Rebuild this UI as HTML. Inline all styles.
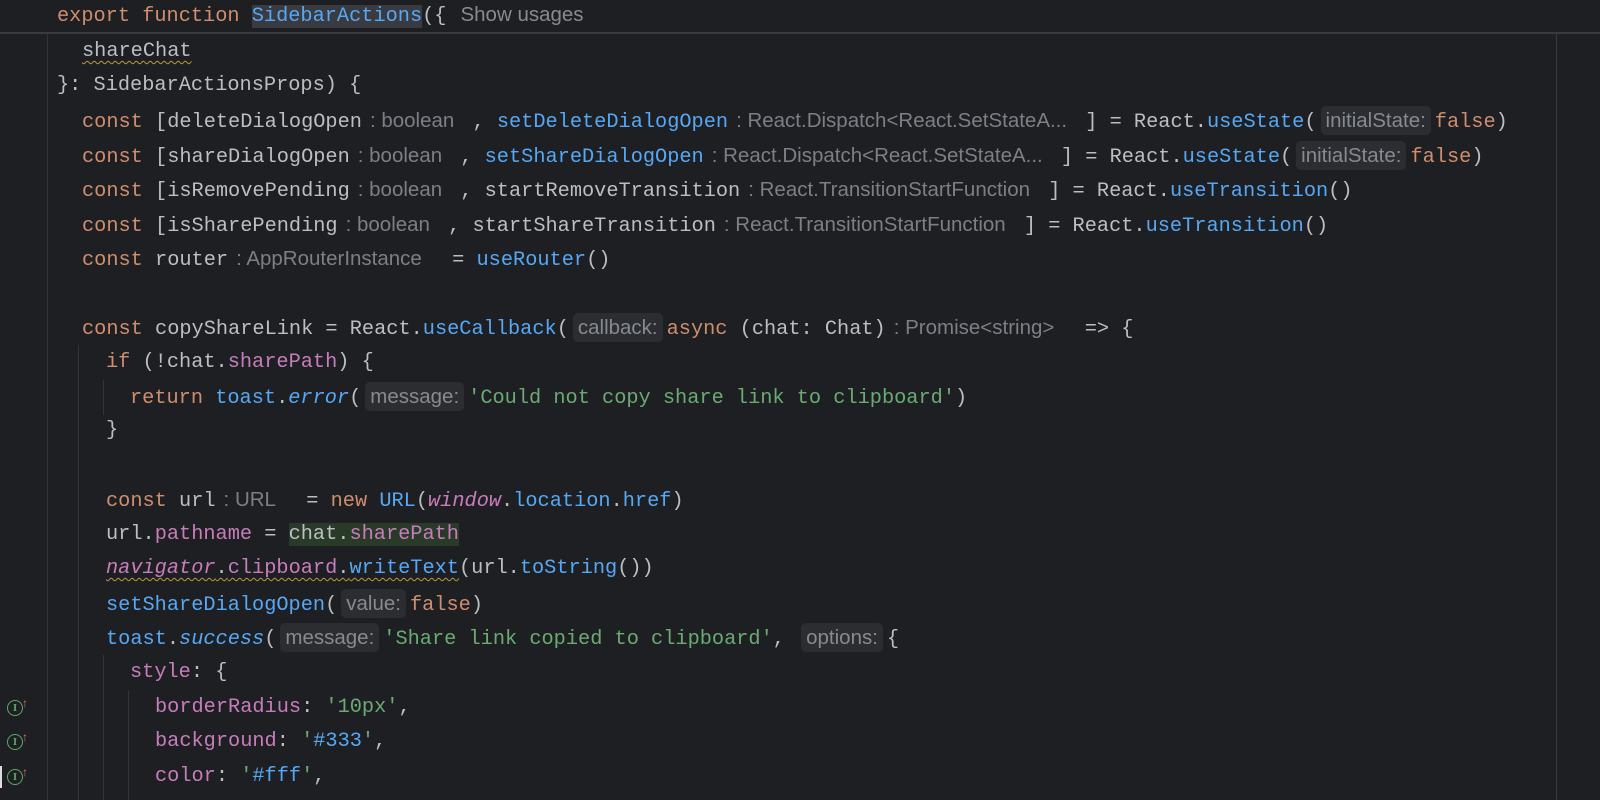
<!DOCTYPE html>
<html><head><meta charset="utf-8"><style>
html,body{margin:0;padding:0;background:#1e1f22;width:1600px;height:800px;overflow:hidden;position:relative}
.l{position:absolute;left:0;height:34px;line-height:34px;white-space:pre;font-family:"Liberation Mono","DejaVu Sans Mono",monospace;font-size:20.3px;color:#bcbec4}
.k{color:#cf8e6d}.f{color:#56a8f5}.p{color:#c77dbb}.s{color:#6aab73}.i{font-style:italic}
.h{font-family:"Liberation Sans",sans-serif;font-size:20.5px;color:#7c7f86;margin:0 6px 0 8px}
.hb{font-family:"Liberation Sans",sans-serif;font-size:20.5px;color:#868a91;background:#2b2d30;border-radius:5px;padding:3px 5px;margin:0 4px}
.w{text-decoration:underline wavy #b89a3e;text-decoration-thickness:1px;text-underline-offset:4px}
.hdr{position:absolute;left:0;top:0;width:1600px;height:32px;background:#1e1f22;border-bottom:2px solid #393b40}
.g{position:absolute;width:1px;background:#313438}
.ic{position:absolute;left:7px;width:14px;height:14px;border:1.5px solid #5fa66b;border-radius:50%;color:#5fa66b;font:bold 11px "Liberation Serif",serif;text-align:center;line-height:14px}
.ar{position:absolute;left:22px;color:#e06c75;font:12px "Liberation Sans",sans-serif}
</style></head><body>
<div class="hdr"></div>
<div class="g" style="left:1556px;top:34px;height:766px;background:#393b40"></div>
<div class="g" style="left:47px;top:34px;height:766px"></div>
<div class="g" style="left:78px;top:345px;height:455px"></div>
<div class="g" style="left:103px;top:380px;height:35px"></div>
<div class="g" style="left:103px;top:655px;height:145px"></div>
<div class="g" style="left:128px;top:690px;height:110px"></div>

<div class="l" style="top:-2px;left:57px"><span class="k">export function </span><span class="f" style="background:#393b40">SidebarActions</span>({<span class="h" style="color:#868a91;margin-left:14px">Show usages</span></div>
<div class="l" style="top:35px;left:82px"><span class="w">shareChat</span></div>
<div class="l" style="top:69px;left:57px">}: SidebarActionsProps) {</div>
<div class="l" style="top:104px;left:82px"><span class="k">const </span>[deleteDialogOpen<span class="h">: boolean</span> , <span class="f">setDeleteDialogOpen</span><span class="h">: React.Dispatch&lt;React.SetStateA...</span> ] = React.<span class="f">useState</span>(<span class="hb">initialState:</span><span class="k">false</span>)</div>
<div class="l" style="top:139px;left:82px"><span class="k">const </span>[shareDialogOpen<span class="h">: boolean</span> , <span class="f">setShareDialogOpen</span><span class="h">: React.Dispatch&lt;React.SetStateA...</span> ] = React.<span class="f">useState</span>(<span class="hb">initialState:</span><span class="k">false</span>)</div>
<div class="l" style="top:173px;left:82px"><span class="k">const </span>[isRemovePending<span class="h">: boolean</span> , startRemoveTransition<span class="h">: React.TransitionStartFunction</span> ] = React.<span class="f">useTransition</span>()</div>
<div class="l" style="top:208px;left:82px"><span class="k">const </span>[isSharePending<span class="h">: boolean</span> , startShareTransition<span class="h">: React.TransitionStartFunction</span> ] = React.<span class="f">useTransition</span>()</div>
<div class="l" style="top:242px;left:82px"><span class="k">const </span>router<span class="h">: AppRouterInstance</span>  = <span class="f">useRouter</span>()</div>
<div class="l" style="top:311px;left:82px"><span class="k">const </span>copyShareLink = React.<span class="f">useCallback</span>(<span class="hb">callback:</span><span class="k">async </span>(chat: Chat)<span class="h">: Promise&lt;string&gt;</span>  =&gt; {</div>
<div class="l" style="top:346px;left:106px"><span class="k">if </span>(!chat.<span class="p">sharePath</span>) {</div>
<div class="l" style="top:380px;left:130px"><span class="k">return </span><span class="f">toast</span>.<span class="f i">error</span>(<span class="hb">message:</span><span class="s">'Could not copy share link to clipboard'</span>)</div>
<div class="l" style="top:414px;left:106px">}</div>
<div class="l" style="top:483px;left:106px"><span class="k">const </span>url<span class="h">: URL</span>  = <span class="k">new </span><span class="f">URL</span>(<span class="p i">window</span>.<span class="f">location</span>.<span class="f">href</span>)</div>
<div class="l" style="top:518px;left:106px">url.<span class="p">pathname</span> = <span style="background:#2a3a28">chat.<span class="p">sharePath</span></span></div>
<div class="l" style="top:552px;left:106px"><span class="w"><span class="p i">navigator</span>.<span class="p">clipboard</span>.<span class="f">writeText</span></span>(url.<span class="f">toString</span>())</div>
<div class="l" style="top:587px;left:106px"><span class="f">setShareDialogOpen</span>(<span class="hb">value:</span><span class="k">false</span>)</div>
<div class="l" style="top:621px;left:106px"><span class="f">toast</span>.<span class="f i">success</span>(<span class="hb">message:</span><span class="s">'Share link copied to clipboard'</span>, <span class="hb">options:</span>{</div>
<div class="l" style="top:656px;left:130px"><span class="p">style</span>: {</div>
<div class="l" style="top:691px;left:155px"><span class="p">borderRadius</span>: <span class="s">'10px'</span>,</div>
<div class="l" style="top:725px;left:155px"><span class="p">background</span>: <span class="s">'</span><span class="f">#333</span><span class="s">'</span>,</div>
<div class="l" style="top:760px;left:155px"><span class="p">color</span>: <span class="s">'</span><span class="f">#fff</span><span class="s">'</span>,</div>

<div class="ic" style="top:700px">I</div><div class="ar" style="top:696px">↑</div>
<div class="ic" style="top:734px">I</div><div class="ar" style="top:730px">↑</div>
<div class="ic" style="top:769px">I</div><div class="ar" style="top:765px">↑</div>
<div style="position:absolute;left:0;top:766px;width:2px;height:22px;background:#ddd"></div>
</body></html>
